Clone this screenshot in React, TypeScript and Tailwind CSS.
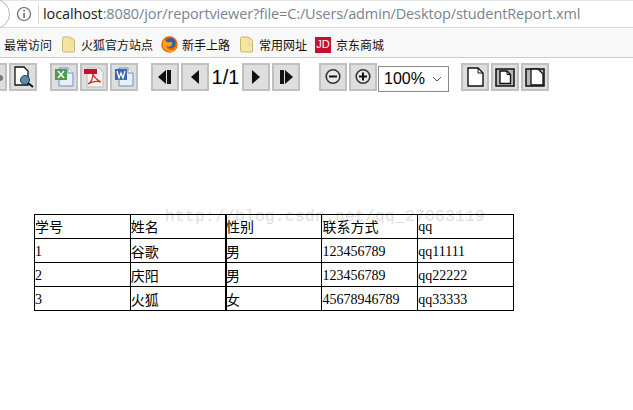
import type { ReactNode } from "react";

const cjk = "font-['Noto_Sans_CJK_SC','Noto_Sans',sans-serif]";

function Folder() {
  return (
    <svg width="15" height="17" viewBox="0 0 15 17" className="shrink-0">
      <path d="M1.5 2.5 Q1.5 1 3 1 H9 L13.5 4 V15 Q13.5 16 12.5 16 H3 Q1.5 16 1.5 14.5 Z" fill="#f3e5a4" stroke="#c9b56e" />
      <path d="M9 1.5 V8 Q11 10 13 9" fill="none" stroke="#e8d58c" />
    </svg>
  );
}

function Firefox() {
  return (
    <svg width="17" height="17" viewBox="0 0 17 17" className="shrink-0">
      <circle cx="8.5" cy="8.5" r="8.2" fill="#e66000" />
      <circle cx="9.5" cy="7" r="5" fill="#2c5fa8" />
      <path d="M3 3 Q5 7 9 6 Q12 5 11 9 Q9 12 5 10 Q7 15 12 14 Q16 11 15 6 Q17 12 12 16 Q5 17 2 11 Q1 6 3 3Z" fill="#f7a21b" />
    </svg>
  );
}

function Bookmark({ icon, label, gap }: { icon: ReactNode; label: string; gap: string }) {
  return (
    <div className={`flex items-center ${gap}`}>
      {icon}
      <span className="text-[12px] text-[#111]">{label}</span>
    </div>
  );
}

function ToolButton({ children, className = "" }: { children?: ReactNode; className?: string }) {
  return (
    <div className={`flex h-[28px] w-[28px] shrink-0 items-center justify-center border-2 border-[#c0c0c0] bg-[#dedede] ${className}`}>
      {children}
    </div>
  );
}

function Sheet({ color, mark }: { color: string; mark: ReactNode }) {
  return (
    <svg width="22" height="22" viewBox="0 0 22 22">
      <path d="M6 2 H15 L20 7 V20 H6 Z" fill="#e8eefa" stroke="#6f8fc0" />
      <path d="M15 2 V7 H20" fill="#fff" stroke="#6f8fc0" />
      <rect x="2" y="3" width="12" height="11" fill={color} />
      {mark}
    </svg>
  );
}

function PageIcon({ frame }: { frame?: boolean }) {
  return (
    <svg width="20" height="20" viewBox="0 0 20 20">
      {frame && <rect x="1" y="2" width="18" height="17" fill="#b8b8b8" stroke="#111" strokeWidth="1.5" />}
      <path d={frame ? "M5 4 H12 L15.5 7.5 V16.5 H5 Z" : "M3 1 H13 L18 6 V19 H3 Z"} fill="#fff" stroke="#111" strokeWidth="1.4" />
      <path d={frame ? "M12 4 V7.5 H15.5" : "M13 1 V6 H18"} fill="none" stroke="#111" />
    </svg>
  );
}

function NavIcon({ points, bar }: { points: string; bar?: number }) {
  return (
    <svg width="16" height="16" viewBox="0 0 16 16">
      <polygon points={points} fill="#111" />
      {bar !== undefined && <rect x={bar} y="1" width="4" height="14" fill="#111" />}
    </svg>
  );
}

function ZoomIcon({ plus }: { plus?: boolean }) {
  return (
    <svg width="18" height="18" viewBox="0 0 18 18">
      <circle cx="9" cy="8.5" r="6.8" fill="#e8e8e8" stroke="#333" strokeWidth="1.6" />
      <rect x="5" y="7.5" width="8" height="2" fill="#111" />
      {plus && <rect x="8" y="4.5" width="2" height="8" fill="#111" />}
    </svg>
  );
}

const rows = [
  { id: "1", name: "谷歌", sex: "男", phone: "123456789", qq: "qq11111", idColor: "text-[#a03020]" },
  { id: "2", name: "庆阳", sex: "男", phone: "123456789", qq: "qq22222", idColor: "text-[#222]" },
  { id: "3", name: "火狐", sex: "女", phone: "45678946789", qq: "qq33333", idColor: "text-[#222]" },
];

const cell = "h-[24px] border border-black p-0 align-middle font-normal text-left text-black";
const num = "font-['Liberation_Serif',serif] text-[14px]";

export default function App() {
  return (
    <div className={`relative h-[410px] w-[633px] overflow-hidden bg-white ${cjk}`}>
      {/* address bar */}
      <div className="flex h-[28px] items-center border-t border-b border-t-[#e4e4e4] border-b-[#dcdcdc] bg-white">
        <div className="ml-[-22px] flex h-[30px] w-[32px] shrink-0 items-center justify-end rounded-full border border-[#b8b8b8] pr-[9px]">
          <span className="h-[3px] w-[3px] bg-[#444]" />
        </div>
        <svg width="16" height="16" viewBox="0 0 16 16" className="ml-[6px] shrink-0">
          <circle cx="8" cy="8" r="6.5" fill="none" stroke="#666" strokeWidth="1.2" />
          <rect x="7.3" y="4" width="1.5" height="1.6" fill="#666" />
          <rect x="7.3" y="7" width="1.5" height="5" fill="#666" />
        </svg>
        <span className="ml-[6px] h-[20px] w-px shrink-0 bg-[#d8d8d8]" />
        <div className="ml-[4px] whitespace-nowrap font-['Open_Sans',sans-serif] text-[14.5px] tracking-[-0.12px] text-[#7a8290]">
          <span className="text-[#1a1a1a]">localhost</span>:8080/jor/reportviewer?file=C:/Users/admin/Desktop/studentReport.xml
        </div>
      </div>

      {/* bookmarks */}
      <div className="flex h-[30px] items-center gap-[8px] border-b border-[#cfcfcf] bg-[#f8f8f8] pl-[4px] pt-[4px]">
        <span className="mr-px text-[12px] text-[#111]">最常访问</span>
        <Bookmark icon={<Folder />} label="火狐官方站点" gap="gap-[5px]" />
        <Bookmark icon={<Firefox />} label="新手上路" gap="gap-[4px]" />
        <Bookmark icon={<Folder />} label="常用网址" gap="gap-[5px] ml-px" />
        <div className="flex items-center gap-[5px]">
          <span className="flex h-[16px] w-[16px] items-center justify-center bg-[#c8102e] font-['Liberation_Sans',sans-serif] text-[11px] leading-none text-white">JD</span>
          <span className="text-[12px] text-[#111]">京东商城</span>
        </div>
      </div>

      {/* report toolbar */}
      <div className="ml-[-21px] mt-[5px] flex h-[28px] items-center">
        <ToolButton>
          <svg width="20" height="20" viewBox="0 0 20 20"><circle cx="17" cy="11" r="3" fill="#777" /></svg>
        </ToolButton>
        <ToolButton className="ml-[2px]">
          <svg width="24" height="24" viewBox="0 0 24 24">
            <path d="M4 2 H13 L17 6 V20 H4 Z" fill="#fff" stroke="#111" strokeWidth="1.3" />
            <circle cx="14" cy="15" r="4.5" fill="#4f8fb0" stroke="#334" />
            <path d="M17 18 L22 22" stroke="#111" strokeWidth="2" />
          </svg>
        </ToolButton>
        <ToolButton className="ml-[13px]">
          <Sheet color="#4e9a4e" mark={<path d="M5 5 L11 12 M11 5 L5 12" stroke="#fff" strokeWidth="1.6" />} />
        </ToolButton>
        <ToolButton className="ml-[2px]">
          <svg width="22" height="22" viewBox="0 0 22 22">
            <path d="M4 2 H16 L20 6 V21 H4 Z" fill="#f5f5f5" stroke="#bbb" />
            <rect x="1" y="3" width="13" height="5" fill="#c8102e" />
            <path d="M10 8 Q10 15 5 18 Q11 14 18 16 Q12 13 10 8Z" fill="none" stroke="#d03030" strokeWidth="1.3" />
          </svg>
        </ToolButton>
        <ToolButton className="ml-[2px]">
          <Sheet color="#3a66b0" mark={<path d="M4 5 L6 12 L8 7 L10 12 L12 5" fill="none" stroke="#fff" strokeWidth="1.3" />} />
        </ToolButton>
        <ToolButton className="ml-[13px]">
          <NavIcon points="1,8 9,1 9,15" bar={10} />
        </ToolButton>
        <ToolButton className="ml-[2px]">
          <NavIcon points="4,8 12,1 12,15" />
        </ToolButton>
        <span className="w-[33px] shrink-0 text-center font-['Liberation_Sans',sans-serif] text-[20px] text-black">1/1</span>
        <ToolButton>
          <NavIcon points="4,1 12,8 4,15" />
        </ToolButton>
        <ToolButton className="ml-[2px]">
          <NavIcon points="7,1 15,8 7,15" bar={2} />
        </ToolButton>
        <ToolButton className="ml-[19px]">
          <ZoomIcon />
        </ToolButton>
        <ToolButton className="ml-[2px]">
          <ZoomIcon plus />
        </ToolButton>
        <div className="ml-px mt-[3px] flex h-[26px] w-[71px] shrink-0 items-center justify-between border border-[#8a8a8a] bg-white pl-[5px] pr-[6px] font-['Liberation_Sans',sans-serif] text-[16px] text-black">
          100%
          <svg width="10" height="6" viewBox="0 0 10 6"><path d="M1 1 L5 5 L9 1" fill="none" stroke="#555" /></svg>
        </div>
        <ToolButton className="ml-[12px]">
          <PageIcon />
        </ToolButton>
        <ToolButton className="ml-[2px]">
          <PageIcon frame />
        </ToolButton>
        <ToolButton className="ml-[2px]">
          <svg width="20" height="20" viewBox="0 0 20 20">
            <rect x="1" y="2" width="18" height="17" fill="#b8b8b8" stroke="#111" strokeWidth="1.5" />
            <path d="M6 2 H13 L18 7 V18 H6 Z" fill="#fff" stroke="#111" strokeWidth="1.3" />
          </svg>
        </ToolButton>
      </div>

      {/* blog watermark */}
      <div className="absolute left-[165px] top-[205px] whitespace-nowrap font-['Liberation_Mono',monospace] text-[16px] tracking-[0.4px] text-[#e0e0e0]">
        http://blog.csdn.net/qq_27063119
      </div>

      {/* report table */}
      <table className="relative ml-[34px] mt-[123px] w-[480px] table-fixed border-collapse">
        <thead>
          <tr>
            <th className={`${cell} text-[14px]`}>学号</th>
            <th className={`${cell} text-[14px]`}>姓名</th>
            <th className={`${cell} border-l-2 text-[14px] [text-indent:-1px]`}>性别</th>
            <th className={`${cell} text-[14px]`}>联系方式</th>
            <th className={`${cell} ${num} text-[13px]`}>qq</th>
          </tr>
        </thead>
        <tbody>
          {rows.map((r) => (
            <tr key={r.id}>
              <td className={`${cell} ${num} pt-px ${r.idColor}`}>{r.id}</td>
              <td className={`${cell} pt-[2px] text-[14px]`}>{r.name}</td>
              <td className={`${cell} border-l-2 pt-[2px] text-[14px] [text-indent:-1px]`}>{r.sex}</td>
              <td className={`${cell} ${num} pt-px`}>{r.phone}</td>
              <td className={`${cell} ${num} pt-[2px]`}>{r.qq}</td>
            </tr>
          ))}
        </tbody>
      </table>
    </div>
  );
}
